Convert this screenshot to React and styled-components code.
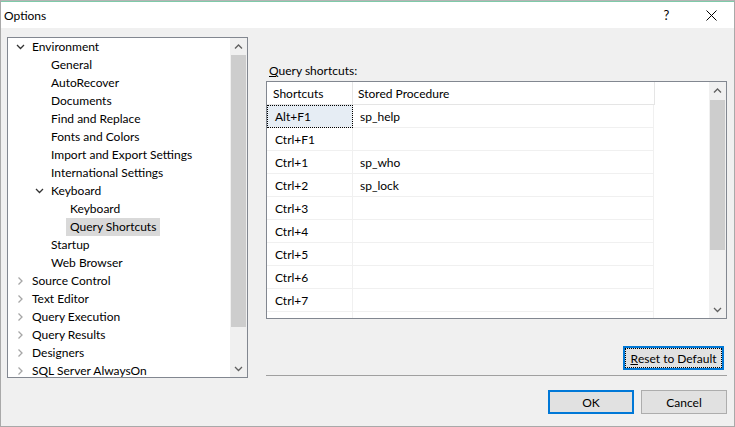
import React from 'react';
import styled, { createGlobalStyle } from 'styled-components';

const GlobalStyle = createGlobalStyle`
  html, body {
    margin: 0;
    padding: 0;
    background: #f0f0f0;
  }
  body {
    font-family: "Segoe UI", Lato, "Noto Sans", "Liberation Sans", sans-serif;
    font-size: 12px;
    color: #000;
  }
`;

const treeItems = [
  { label: 'Environment', level: 0, state: 'open' },
  { label: 'General', level: 1 },
  { label: 'AutoRecover', level: 1 },
  { label: 'Documents', level: 1 },
  { label: 'Find and Replace', level: 1 },
  { label: 'Fonts and Colors', level: 1 },
  { label: 'Import and Export Settings', level: 1 },
  { label: 'International Settings', level: 1 },
  { label: 'Keyboard', level: 1, state: 'open' },
  { label: 'Keyboard', level: 2 },
  { label: 'Query Shortcuts', level: 2, selected: true },
  { label: 'Startup', level: 1 },
  { label: 'Web Browser', level: 1 },
  { label: 'Source Control', level: 0, state: 'closed' },
  { label: 'Text Editor', level: 0, state: 'closed' },
  { label: 'Query Execution', level: 0, state: 'closed' },
  { label: 'Query Results', level: 0, state: 'closed' },
  { label: 'Designers', level: 0, state: 'closed' },
  { label: 'SQL Server AlwaysOn', level: 0, state: 'closed' },
];

// last row is only a sliver at the bottom of the grid
const shortcuts = [
  ['Alt+F1', 'sp_help'],
  ['Ctrl+F1', ''],
  ['Ctrl+1', 'sp_who'],
  ['Ctrl+2', 'sp_lock'],
  ['Ctrl+3', ''],
  ['Ctrl+4', ''],
  ['Ctrl+5', ''],
  ['Ctrl+6', ''],
  ['Ctrl+7', ''],
  ['', ''],
];

const Window = styled.div`
  width: 735px;
  height: 427px;
  box-sizing: border-box;
  border: 1px solid #a9a9a9;
  border-top-color: #b4b4b4;
  display: flex;
  flex-direction: column;
  background: #f0f0f0;
  overflow: hidden;
`;

const TitleBar = styled.div`
  height: 26px;
  background: #fff;
  border-top: 1px solid #7fcaa9;
  display: flex;
  align-items: center;
  padding-left: 3px;
`;

const Title = styled.div`
  flex: 1;
`;

const TitleButton = styled.div`
  width: 45px;
  height: 26px;
  display: flex;
  align-items: center;
  justify-content: center;
  font-size: 13px;
  color: #000;
`;

const Body = styled.div`
  flex: 1;
  display: flex;
  flex-direction: column;
  padding: 9px 7px 0 6px;
`;

const Main = styled.div`
  display: flex;
  gap: 18px;
`;

const TreeBox = styled.div`
  width: 241px;
  height: 341px;
  box-sizing: border-box;
  border: 1px solid #828790;
  background: #fff;
  display: flex;
  overflow: hidden;
`;

const TreeList = styled.div`
  flex: 1;
  overflow: hidden;
`;

const TreeRow = styled.div`
  height: 18px;
  display: flex;
  align-items: center;
  padding-left: ${(p) => 4 + p.$level * 19}px;
  white-space: nowrap;
`;

const Expander = styled.span`
  width: 16px;
  height: 18px;
  margin-right: 4px;
  display: flex;
  align-items: center;
  justify-content: center;
`;

const TreeLabel = styled.span`
  padding: 0 4px;
  margin-left: -4px;
  height: 18px;
  line-height: 18px;
  background: ${(p) => (p.$selected ? '#d9d9d9' : 'transparent')};
`;

const ScrollBar = styled.div`
  width: 17px;
  background: #f0f0f0;
  display: flex;
  flex-direction: column;
  flex-shrink: 0;
`;

const ScrollArrow = styled.div`
  height: 17px;
  display: flex;
  align-items: center;
  justify-content: center;
  flex-shrink: 0;
`;

const ScrollTrack = styled.div`
  flex: 1;
  display: flex;
  flex-direction: column;
`;

const Thumb = styled.div`
  height: ${(p) => p.$size}px;
  margin-top: ${(p) => p.$offset}px;
  margin-right: 1px;
  margin-left: 1px;
  background: #cdcdcd;
`;

const RightPane = styled.div`
  width: 461px;
  display: flex;
  flex-direction: column;
  padding-top: 25px;
`;

const Label = styled.div`
  height: 16px;
  line-height: 17px;
  padding-left: 3px;
`;

const Grid = styled.div`
  margin-top: 3px;
  height: 238px;
  box-sizing: border-box;
  border: 1px solid #828790;
  background: #fff;
  display: flex;
  overflow: hidden;
`;

const GridBody = styled.div`
  flex: 1;
  overflow: hidden;
`;

const GridRow = styled.div`
  display: flex;
  height: 23px;
`;

const Cell = styled.div`
  width: ${(p) => p.$width}px;
  box-sizing: border-box;
  display: flex;
  align-items: center;
  padding-left: ${(p) => p.$pad}px;
  padding-top: 1px;
  border-right: 1px solid ${(p) => (p.$header ? '#e5e5e5' : '#f0f0f0')};
  border-bottom: 1px solid ${(p) => (p.$header ? '#e5e5e5' : '#f0f0f0')};
  white-space: nowrap;
  background: ${(p) => (p.$active ? '#e6edf4' : '#fff')};
  outline: ${(p) => (p.$active ? '1px dotted #000' : 'none')};
  outline-offset: -1px;
`;

const Filler = styled.div`
  flex: 1;
`;

const ResetRow = styled.div`
  margin-top: 27px;
  display: flex;
  justify-content: flex-end;
  padding-right: 3px;
`;

const Separator = styled.div`
  margin-top: 5px;
  height: 1px;
  background: #a0a0a0;
`;

const Button = styled.button`
  width: ${(p) => p.$width}px;
  height: 24px;
  box-sizing: border-box;
  padding: 1px;
  font: inherit;
  color: #000;
  background: #e1e1e1;
  border: ${(p) => (p.$primary ? '2px solid #0078d7' : '1px solid #adadad')};
  display: flex;
  align-items: center;
  justify-content: center;
  white-space: nowrap;
`;

const FocusRect = styled.span`
  flex: 1;
  align-self: stretch;
  display: flex;
  align-items: center;
  justify-content: center;
  outline: 1px dotted #000;
`;

const Footer = styled.div`
  margin-top: 12px;
  display: flex;
  justify-content: flex-end;
  gap: 7px;
`;

const Chevron = ({ dir, color = '#404040' }) => {
  const points = {
    down: '1,2 4.5,5.5 8,2',
    right: '2.5,0.5 6,4 2.5,7.5',
    up: '1,5.5 4.5,2 8,5.5',
  }[dir];
  return (
    <svg width="9" height="8" viewBox="0 0 9 8">
      <polyline points={points} fill="none" stroke={color} strokeWidth="1.3" />
    </svg>
  );
};

const VScroll = ({ offset, thumb }) => (
  <ScrollBar>
    <ScrollArrow>
      <Chevron dir="up" color="#606060" />
    </ScrollArrow>
    <ScrollTrack>
      <Thumb $offset={offset} $size={thumb} />
    </ScrollTrack>
    <ScrollArrow>
      <Chevron dir="down" color="#606060" />
    </ScrollArrow>
  </ScrollBar>
);

const App = () => (
  <>
    <GlobalStyle />
    <Window>
      <TitleBar>
        <Title>Options</Title>
        <TitleButton>?</TitleButton>
        <TitleButton>
          <svg width="11" height="11" viewBox="0 0 11 11">
            <path d="M0.5 0.5 L10.5 10.5 M10.5 0.5 L0.5 10.5" stroke="#000" strokeWidth="1" />
          </svg>
        </TitleButton>
      </TitleBar>
      <Body>
        <Main>
          <TreeBox>
            <TreeList>
              {treeItems.map((item, i) => (
                <TreeRow key={i} $level={item.level}>
                  <Expander>
                    {item.state === 'open' && <Chevron dir="down" color="#333" />}
                    {item.state === 'closed' && <Chevron dir="right" color="#a6a6a6" />}
                  </Expander>
                  <TreeLabel $selected={item.selected}>{item.label}</TreeLabel>
                </TreeRow>
              ))}
            </TreeList>
            <VScroll offset={0} thumb={272} />
          </TreeBox>
          <RightPane>
            <Label>
              <u>Q</u>uery shortcuts:
            </Label>
            <Grid>
              <GridBody>
                <GridRow>
                  <Cell $width={86} $pad={6} $header>Shortcuts</Cell>
                  <Cell $width={302} $pad={5} $header>Stored Procedure</Cell>
                  <Filler />
                </GridRow>
                {shortcuts.map(([key, proc], i) => (
                  <GridRow key={i}>
                    <Cell $width={86} $pad={8} $active={i === 0}>{key}</Cell>
                    <Cell $width={301} $pad={7}>{proc}</Cell>
                    <Filler />
                  </GridRow>
                ))}
              </GridBody>
              <VScroll offset={1} thumb={150} />
            </Grid>
            <ResetRow>
              <Button $width={101} $primary>
                <FocusRect>
                  <u>R</u>eset to Default
                </FocusRect>
              </Button>
            </ResetRow>
            <Separator />
          </RightPane>
        </Main>
        <Footer>
          <Button $width={86} $primary>OK</Button>
          <Button $width={86}>Cancel</Button>
        </Footer>
      </Body>
    </Window>
  </>
);

export default App;
